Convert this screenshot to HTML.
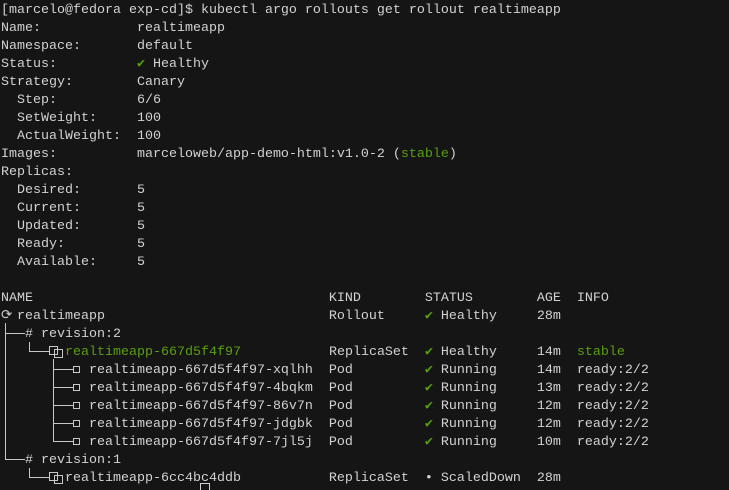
<!DOCTYPE html>
<html><head><meta charset="utf-8"><style>
html,body{margin:0;padding:0;background:#151515;width:729px;height:488px;overflow:hidden}
pre{margin:0;position:absolute;left:1px;top:2px;font-family:"Liberation Mono","DejaVu Sans Mono",monospace;font-size:13.33px;line-height:18px;color:#d2d2d2;white-space:pre}
.g{color:#5a9e14}
.c{display:inline-block;width:8px;text-align:center;overflow:visible}
.l{position:absolute;background:#c8c8c8}
.b{position:absolute;border:1px solid #c8c8c8;box-sizing:border-box}
.cur{position:absolute;left:200px;top:483px;width:8px;height:6px;border:1px solid #d2d2d2;border-bottom:none}
</style></head><body>
<pre>[marcelo@fedora exp-cd]$ kubectl argo rollouts get rollout realtimeapp
Name:            realtimeapp
Namespace:       default
Status:          <span class="c g">✔</span> Healthy
Strategy:        Canary
  Step:          6/6
  SetWeight:     100
  ActualWeight:  100
Images:          marceloweb/app-demo-html:v1.0-2 (<span class="g">stable</span>)
Replicas:
  Desired:       5
  Current:       5
  Updated:       5
  Ready:         5
  Available:     5

NAME                                     KIND        STATUS        AGE  INFO
<span class="c">⟳</span> realtimeapp                            Rollout     <span class="c g">✔</span> Healthy     28m
   # revision:2
        <span class="g">realtimeapp-667d5f4f97</span>           ReplicaSet  <span class="c g">✔</span> Healthy     14m  <span class="g">stable</span>
           realtimeapp-667d5f4f97-xqlhh  Pod         <span class="c g">✔</span> Running     14m  ready:2/2
           realtimeapp-667d5f4f97-4bqkm  Pod         <span class="c g">✔</span> Running     13m  ready:2/2
           realtimeapp-667d5f4f97-86v7n  Pod         <span class="c g">✔</span> Running     12m  ready:2/2
           realtimeapp-667d5f4f97-jdgbk  Pod         <span class="c g">✔</span> Running     12m  ready:2/2
           realtimeapp-667d5f4f97-7jl5j  Pod         <span class="c g">✔</span> Running     10m  ready:2/2
   # revision:1
        realtimeapp-6cc4bc4ddb           ReplicaSet  <span class="c">•</span> ScaledDown  28m</pre>

<!-- tree -->
<div class="l" style="left:5px;top:323px;width:1px;height:137px"></div>
<div class="l" style="left:5px;top:333px;width:20px;height:1px"></div>
<div class="l" style="left:5px;top:459px;width:20px;height:1px"></div>

<div class="l" style="left:29px;top:342px;width:1px;height:10px"></div>
<div class="l" style="left:29px;top:351px;width:20px;height:1px"></div>
<div class="b" style="left:49px;top:346px;width:9px;height:9px"></div>
<div class="b" style="left:54px;top:349px;width:9px;height:9px"></div>

<div class="l" style="left:53px;top:359px;width:1px;height:83px"></div>
<div class="l" style="left:53px;top:369px;width:20px;height:1px"></div>
<div class="l" style="left:53px;top:387px;width:20px;height:1px"></div>
<div class="l" style="left:53px;top:405px;width:20px;height:1px"></div>
<div class="l" style="left:53px;top:423px;width:20px;height:1px"></div>
<div class="l" style="left:53px;top:441px;width:20px;height:1px"></div>
<div class="b" style="left:73px;top:366px;width:7px;height:7px"></div>
<div class="b" style="left:73px;top:384px;width:7px;height:7px"></div>
<div class="b" style="left:73px;top:402px;width:7px;height:7px"></div>
<div class="b" style="left:73px;top:420px;width:7px;height:7px"></div>
<div class="b" style="left:73px;top:438px;width:7px;height:7px"></div>

<div class="l" style="left:29px;top:468px;width:1px;height:10px"></div>
<div class="l" style="left:29px;top:477px;width:20px;height:1px"></div>
<div class="b" style="left:49px;top:472px;width:9px;height:9px"></div>
<div class="b" style="left:54px;top:475px;width:9px;height:9px"></div>

<div class="cur"></div>
</body></html>
